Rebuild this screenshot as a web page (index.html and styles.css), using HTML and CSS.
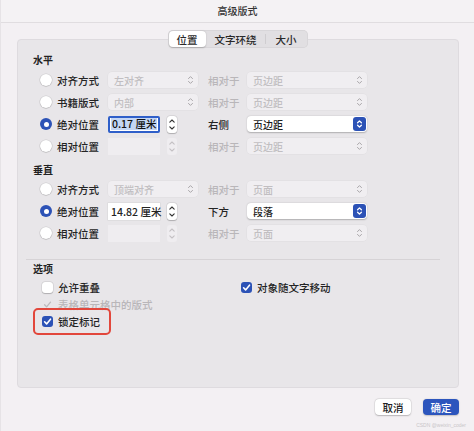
FILE: index.html
```html
<!DOCTYPE html>
<html lang="zh">
<head>
<meta charset="utf-8">
<link rel="stylesheet" href="styles.css">
</head>
<body>
<div class="window">
  <div class="titlebar">高级版式</div>
  <div class="tabs">
    <span class="tab tab-sel">位置</span>
    <span class="tab tab-mid">文字环绕</span>
    <span class="tab tab-last">大小</span>
  </div>
  <div class="panel">
    <div class="heading">水平</div>
    <div class="row">
      <span class="radio"></span><span class="label">对齐方式</span>
      <span class="select dis"><span>左对齐</span><svg class="chev" viewBox="0 0 7 10"><path d="M1.5 3.6L3.5 1.6L5.5 3.6M1.5 6.4L3.5 8.4L5.5 6.4"/></svg></span>
      <span class="label2 dim">相对于</span>
      <span class="select dis"><span>页边距</span><svg class="chev" viewBox="0 0 7 10"><path d="M1.5 3.6L3.5 1.6L5.5 3.6M1.5 6.4L3.5 8.4L5.5 6.4"/></svg></span>
    </div>
    <div class="row">
      <span class="radio"></span><span class="label">书籍版式</span>
      <span class="select dis"><span>内部</span><svg class="chev" viewBox="0 0 7 10"><path d="M1.5 3.6L3.5 1.6L5.5 3.6M1.5 6.4L3.5 8.4L5.5 6.4"/></svg></span>
      <span class="label2 dim">相对于</span>
      <span class="select dis"><span>页边距</span><svg class="chev" viewBox="0 0 7 10"><path d="M1.5 3.6L3.5 1.6L5.5 3.6M1.5 6.4L3.5 8.4L5.5 6.4"/></svg></span>
    </div>
    <div class="row">
      <span class="radio on"></span><span class="label">绝对位置</span>
      <span class="num-group">
        <span class="input focus"><span class="sel-text">0.17 厘米</span></span>
        <span class="stepper"><svg viewBox="0 0 10 17"><path d="M2.8 6.2L5 4L7.2 6.2M2.8 10.8L5 13L7.2 10.8"/></svg></span>
      </span>
      <span class="label2">右侧</span>
      <span class="select act"><span>页边距</span><span class="pop"><svg viewBox="0 0 7 10"><path d="M1.6 3.8L3.5 1.9L5.4 3.8M1.6 6.2L3.5 8.1L5.4 6.2"/></svg></span></span>
    </div>
    <div class="row">
      <span class="radio"></span><span class="label">相对位置</span>
      <span class="num-group">
        <span class="input dis-in"></span>
        <span class="stepper dis-st"><svg viewBox="0 0 10 17"><path d="M2.8 6.2L5 4L7.2 6.2M2.8 10.8L5 13L7.2 10.8"/></svg></span>
      </span>
      <span class="label2 dim">相对于</span>
      <span class="select dis"><span>页边距</span><svg class="chev" viewBox="0 0 7 10"><path d="M1.5 3.6L3.5 1.6L5.5 3.6M1.5 6.4L3.5 8.4L5.5 6.4"/></svg></span>
    </div>

    <div class="heading heading-v">垂直</div>
    <div class="row">
      <span class="radio"></span><span class="label">对齐方式</span>
      <span class="select dis"><span>顶端对齐</span><svg class="chev" viewBox="0 0 7 10"><path d="M1.5 3.6L3.5 1.6L5.5 3.6M1.5 6.4L3.5 8.4L5.5 6.4"/></svg></span>
      <span class="label2 dim">相对于</span>
      <span class="select dis"><span>页面</span><svg class="chev" viewBox="0 0 7 10"><path d="M1.5 3.6L3.5 1.6L5.5 3.6M1.5 6.4L3.5 8.4L5.5 6.4"/></svg></span>
    </div>
    <div class="row">
      <span class="radio on"></span><span class="label">绝对位置</span>
      <span class="num-group">
        <span class="input plain">14.82 厘米</span>
        <span class="stepper"><svg viewBox="0 0 10 17"><path d="M2.8 6.2L5 4L7.2 6.2M2.8 10.8L5 13L7.2 10.8"/></svg></span>
      </span>
      <span class="label2">下方</span>
      <span class="select act"><span>段落</span><span class="pop"><svg viewBox="0 0 7 10"><path d="M1.6 3.8L3.5 1.9L5.4 3.8M1.6 6.2L3.5 8.1L5.4 6.2"/></svg></span></span>
    </div>
    <div class="row">
      <span class="radio"></span><span class="label">相对位置</span>
      <span class="num-group">
        <span class="input dis-in"></span>
        <span class="stepper dis-st"><svg viewBox="0 0 10 17"><path d="M2.8 6.2L5 4L7.2 6.2M2.8 10.8L5 13L7.2 10.8"/></svg></span>
      </span>
      <span class="label2 dim">相对于</span>
      <span class="select dis"><span>页面</span><svg class="chev" viewBox="0 0 7 10"><path d="M1.5 3.6L3.5 1.6L5.5 3.6M1.5 6.4L3.5 8.4L5.5 6.4"/></svg></span>
    </div>

    <div class="sep"></div>

    <div class="heading heading-o">选项</div>
    <div class="options">
      <span class="opt"><span class="chk"></span><span>允许重叠</span></span>
      <span class="opt"><span class="chk on"><svg viewBox="0 0 11 11"><path d="M2.6 5.8L4.6 7.9L8.5 3.2"/></svg></span><span>对象随文字移动</span></span>
      <span class="opt dim"><span class="chk ghost"><svg viewBox="0 0 11 11"><path d="M2.6 5.8L4.6 7.9L8.5 3.2"/></svg></span><span>表格单元格中的版式</span></span>
      <span></span>
      <span class="opt marked"><span class="chk on"><svg viewBox="0 0 11 11"><path d="M2.6 5.8L4.6 7.9L8.5 3.2"/></svg></span><span>锁定标记</span></span>
      <span></span>
    </div>
  </div>
  <div class="buttons">
    <span class="btn">取消</span>
    <span class="btn btn-primary">确定</span>
  </div>
  <span class="watermark">CSDN @weixin_coder</span>
</div>
</body>
</html>
```

FILE: styles.css
```css
* { box-sizing: border-box; }
html, body { margin: 0; padding: 0; }
body {
  width: 474px;
  height: 431px;
  overflow: hidden;
  background: #f3f0f3;
  font-family: "Noto Sans CJK SC", "Noto Sans", sans-serif;
  color: #242424;
  font-size: 10.5px;
  font-weight: 500;
}
.window {
  position: relative;
  width: 474px;
  height: 431px;
  border-left: 1px solid #e6e3e6;
  display: flex;
  flex-direction: column;
}
.titlebar {
  height: 23px;
  line-height: 22px;
  text-align: center;
  font-size: 10px;
  color: #333;
  border-bottom: 1px solid #e0dde0;
  background: #f4f2f4;
}
.tabs {
  position: relative;
  z-index: 1;
  align-self: center;
  margin-top: 7px;
  height: 18px;
  display: flex;
  background: #e1dfe2;
  border-radius: 5px;
  box-shadow: inset 0 0 0 0.5px rgba(0,0,0,0.08);
  padding: 1px;
}
.tab {
  position: relative;
  display: flex;
  align-items: center;
  justify-content: center;
  height: 16px;
  font-size: 10.5px;
  color: #2a2a2a;
}
.tab-sel {
  width: 37px;
  background: #fff;
  border-radius: 4px;
  box-shadow: 0 0.5px 1.5px rgba(0,0,0,0.22);
}
.tab-mid { width: 60px; }
.tab-mid::after {
  content: "";
  position: absolute;
  right: 0;
  top: 3px;
  bottom: 3px;
  width: 1px;
  background: #cfcdd0;
}
.tab-last { width: 41px; }

.panel {
  margin: -9px 0 0 16px;
  width: 442px;
  height: 349px;
  background: #e8e6e9;
  border: 1px solid #dedbdf;
  border-radius: 4px;
  padding: 13px 16px 0 15px;
}
.heading {
  height: 14px;
  line-height: 14px;
  font-size: 10px;
  font-weight: 700;
  color: #222;
  margin-bottom: 2px;
}
.heading-v { margin-top: 6px; margin-bottom: 1px; }
.heading-o { margin-top: 2px; margin-bottom: 3px; }

.row {
  display: grid;
  grid-template-columns: 12px 56px 90px 49px 120px;
  align-items: center;
  height: 22px;
  padding-left: 7px;
}
.radio {
  width: 12px;
  height: 12px;
  border-radius: 50%;
  background: #fff;
  box-shadow: 0 0 0 0.5px rgba(0,0,0,0.12), 0 0.5px 1px rgba(0,0,0,0.2);
}
.radio.on {
  background: #2c52b6;
  box-shadow: none;
  position: relative;
}
.radio.on::after {
  content: "";
  position: absolute;
  left: 3.5px;
  top: 3.5px;
  width: 5px;
  height: 5px;
  border-radius: 50%;
  background: #fff;
}
.label { padding-left: 5px; white-space: nowrap; }
.label2 { padding-left: 10px; white-space: nowrap; }
.dim { color: #b9b6b9; }

.select {
  height: 16px;
  border-radius: 4px;
  display: flex;
  align-items: center;
  justify-content: space-between;
  padding: 0 4px 0 6px;
  font-size: 10px;
  white-space: nowrap;
}
.select.dis {
  background: #f0eef1;
  color: #c1bec1;
  box-shadow: 0 0 0 0.5px rgba(0,0,0,0.04);
}
.chev { width: 7px; height: 10px; }
.chev path { fill: none; stroke: #a9a6a9; stroke-width: 1; stroke-linecap: round; stroke-linejoin: round; }
.select.act {
  background: #fff;
  color: #1e1e1e;
  padding: 0 1px 0 6px;
  box-shadow: 0 0.5px 1.5px rgba(0,0,0,0.25);
}
.pop {
  width: 13px;
  height: 14px;
  border-radius: 3px;
  background: #2c52b6;
  display: flex;
  align-items: center;
  justify-content: center;
}
.pop svg { width: 7px; height: 10px; }
.pop path { fill: none; stroke: #fff; stroke-width: 1.3; stroke-linecap: round; stroke-linejoin: round; }

.num-group { display: flex; align-items: center; gap: 7px; }
.input {
  width: 52px;
  height: 17px;
  display: flex;
  align-items: center;
  font-size: 10.5px;
  white-space: nowrap;
}
.input.focus {
  background: #fff;
  border: 2px solid #2f5fc9;
  border-radius: 2px;
  padding-left: 1px;
}
.sel-text { background: #c4d6f4; padding: 0 1px; line-height: 12px; color: #111; }
.input.plain {
  background: #fff;
  padding-left: 3px;
  box-shadow: 0 0 0 0.5px rgba(0,0,0,0.08);
}
.input.dis-in { background: #efedf0; }
.stepper {
  width: 10px;
  height: 17px;
  border-radius: 3px;
  background: #fff;
  box-shadow: 0 0 0 0.5px rgba(0,0,0,0.1), 0 0.5px 1px rgba(0,0,0,0.2);
  display: flex;
}
.stepper svg { width: 10px; height: 17px; }
.stepper path { fill: none; stroke: #333; stroke-width: 1.1; stroke-linecap: round; stroke-linejoin: round; }
.stepper.dis-st { background: #efedf0; box-shadow: none; }
.stepper.dis-st path { stroke: #c4c1c4; }

.sep {
  height: 1px;
  background: #d6d3d6;
  margin: 15px 2px 0 -7px;
}

.options {
  display: grid;
  grid-template-columns: 199px auto;
  grid-auto-rows: 17px;
  align-items: center;
  margin-left: 9px;
}
.opt {
  display: flex;
  align-items: center;
  gap: 5px;
  white-space: nowrap;
  font-size: 10.5px;
}
.chk {
  width: 11px;
  height: 11px;
  border-radius: 3px;
  background: #fff;
  box-shadow: 0 0 0 0.5px rgba(0,0,0,0.1), 0 0.5px 1px rgba(0,0,0,0.2);
  display: flex;
  flex: none;
}
.chk svg { width: 11px; height: 11px; }
.chk path { fill: none; stroke: #fff; stroke-width: 1.6; stroke-linecap: round; stroke-linejoin: round; }
.chk.on { background: #2c52b6; box-shadow: none; }
.chk.ghost { background: transparent; box-shadow: none; }
.chk.ghost path { stroke: #bdbabd; stroke-width: 1.3; }
.marked { position: relative; justify-self: start; }
.marked::after {
  content: "";
  position: absolute;
  left: -9px;
  right: -11px;
  top: -6px;
  bottom: -6px;
  border: 2px solid #e2473c;
  border-radius: 5px;
}

.buttons {
  display: flex;
  justify-content: flex-end;
  gap: 12px;
  padding-right: 15px;
  margin-top: 11px;
}
.btn {
  width: 36px;
  height: 16px;
  border-radius: 4px;
  background: #fff;
  display: flex;
  align-items: center;
  justify-content: center;
  font-size: 10.5px;
  color: #222;
  box-shadow: 0 0 0 0.5px rgba(0,0,0,0.08), 0 0.5px 1.5px rgba(0,0,0,0.22);
}
.btn-primary {
  background: #2c55bd;
  color: #fff;
  box-shadow: 0 0.5px 1.5px rgba(0,0,0,0.2);
}
.watermark {
  position: absolute;
  right: 8px;
  bottom: 3px;
  font-size: 5px;
  color: #c9c6c9;
  font-family: "Liberation Sans", sans-serif;
}
```
